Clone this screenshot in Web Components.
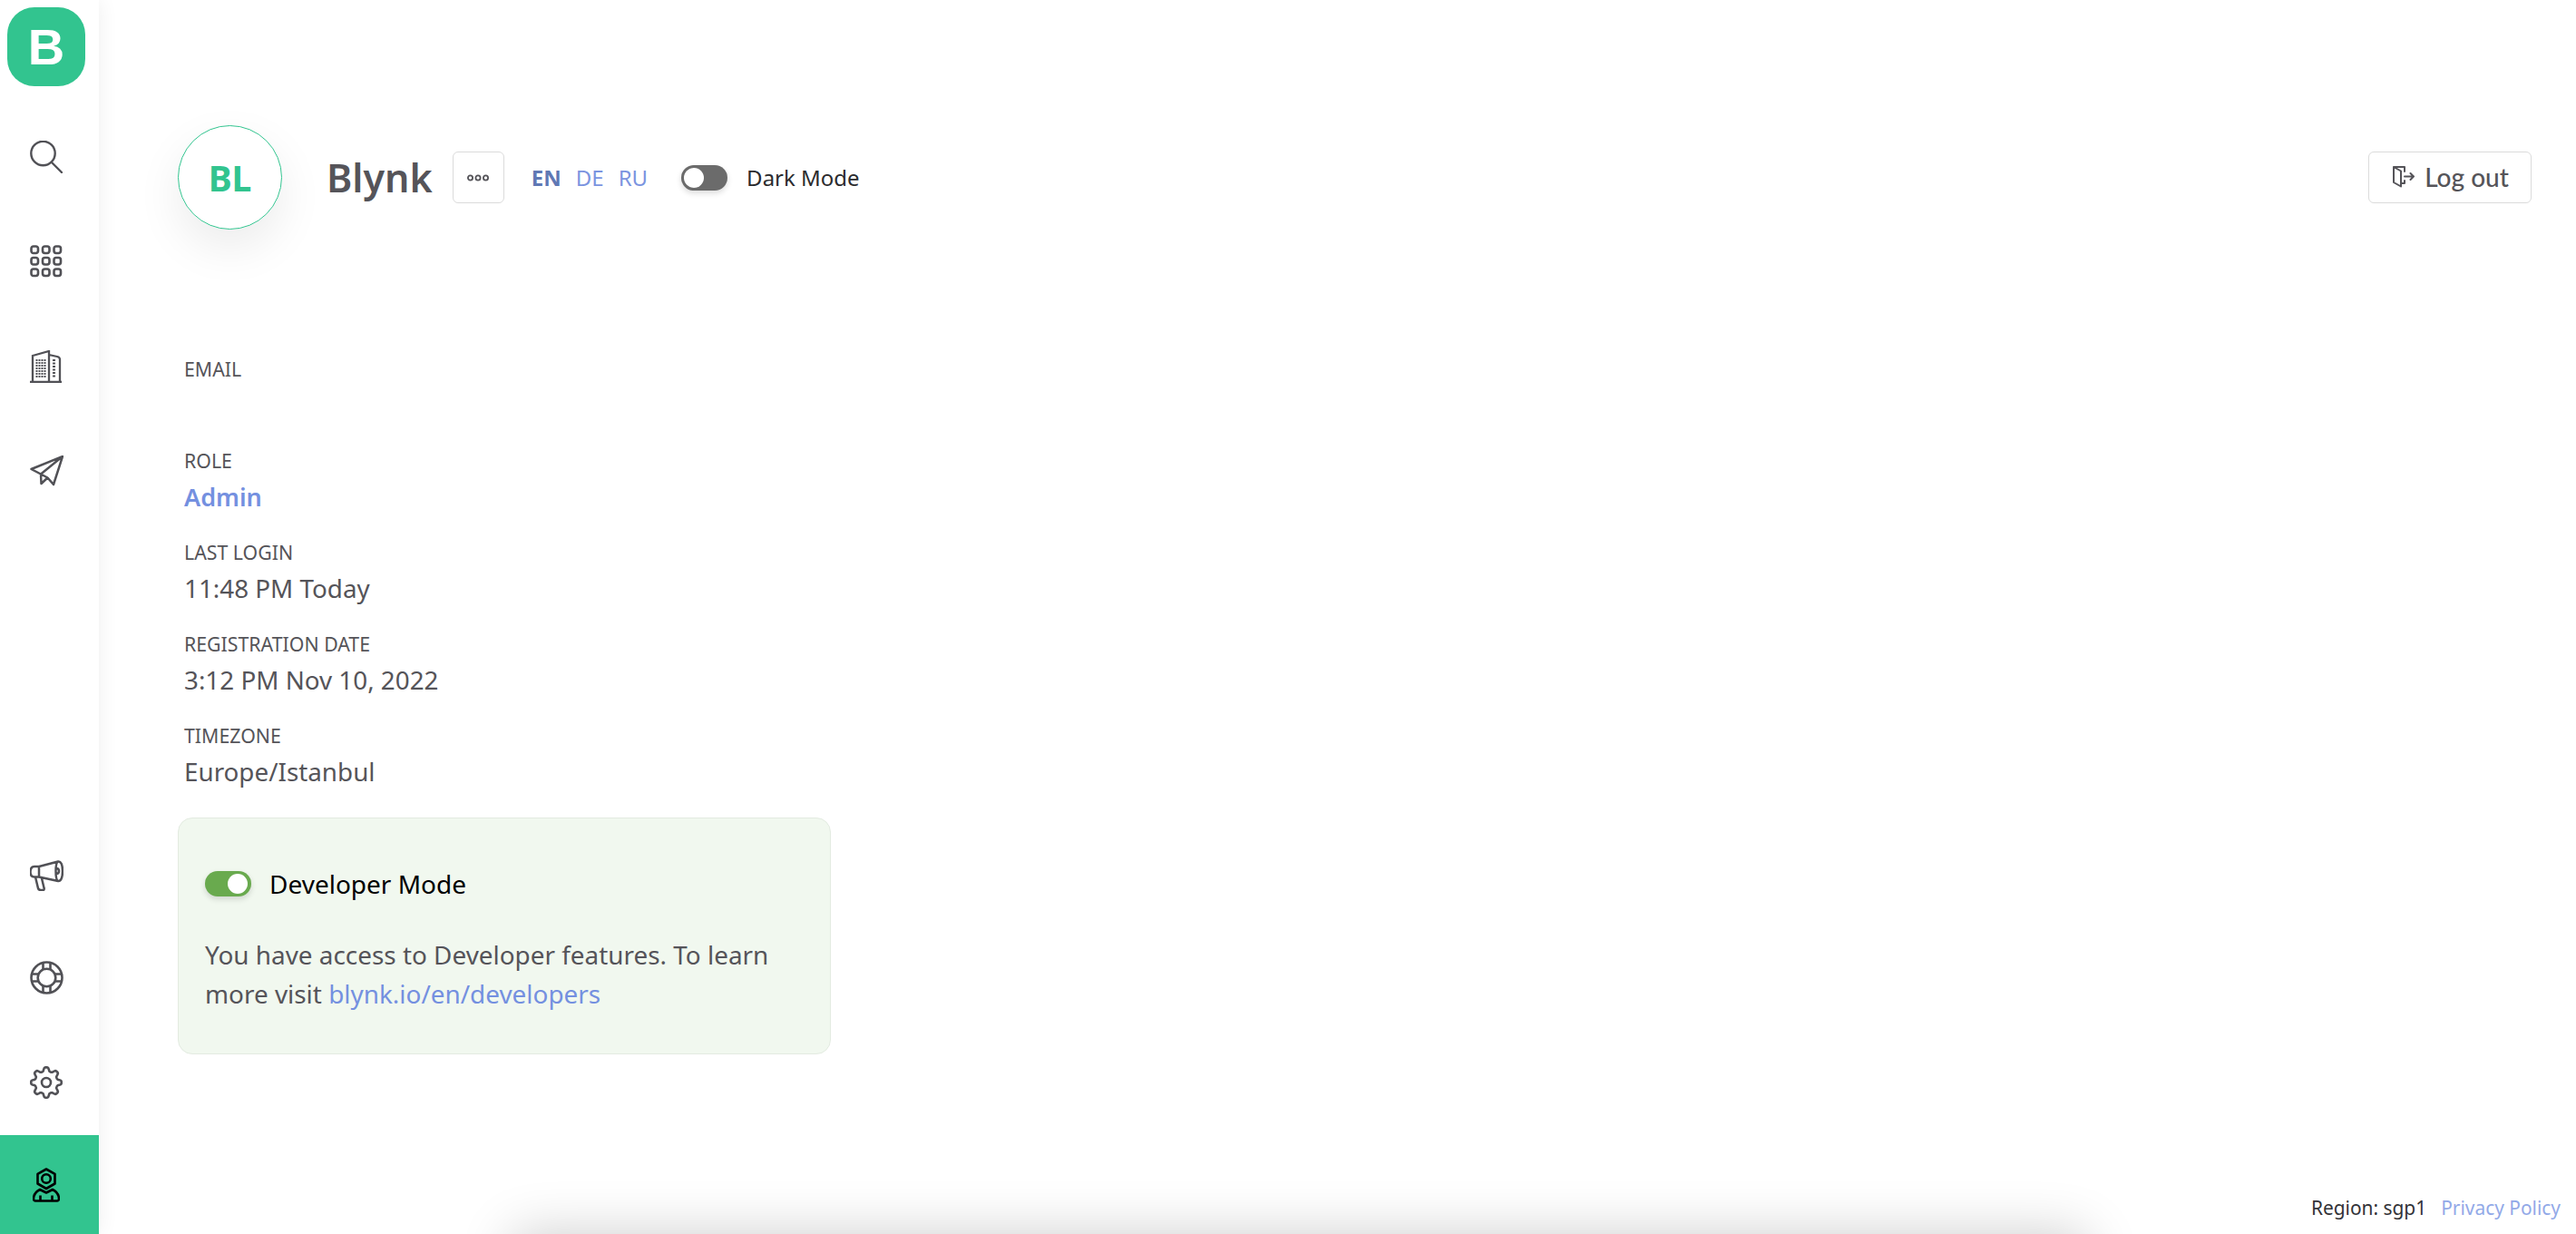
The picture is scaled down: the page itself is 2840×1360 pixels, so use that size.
<!DOCTYPE html>
<html lang="en">
<head>
<meta charset="utf-8">
<title>Blynk profile</title>
<style>
    html, body { margin: 0; height: 100%; }
    body {
        font-family: "Noto Sans", sans-serif;
        color: #555459;
        background: #fff;
        overflow: hidden;
    }
</style>
</head>
<body>
<app-shell>
    <side-bar slot="side">
        <nav-item slot="top">
            <svg width="36" height="36" viewBox="0 0 36 36" fill="none" stroke="currentColor" stroke-width="2.400" stroke-linecap="round"><circle cx="14.500" cy="14" r="13.200"/><path d="M24 24l11 11"/></svg>
        </nav-item>
        <nav-item slot="top">
            <svg width="36" height="36" viewBox="0 0 36 36" fill="none" stroke="currentColor" stroke-width="2.600"><rect x="1.500" y="1.500" width="7.500" height="7.500" rx="2.400"/><rect x="14" y="1.500" width="7.500" height="7.500" rx="2.400"/><rect x="26.500" y="1.500" width="7.500" height="7.500" rx="2.400"/><rect x="1.500" y="14" width="7.500" height="7.500" rx="2.400"/><rect x="14" y="14" width="7.500" height="7.500" rx="2.400"/><rect x="26.500" y="14" width="7.500" height="7.500" rx="2.400"/><rect x="1.500" y="26.500" width="7.500" height="7.500" rx="2.400"/><rect x="14" y="26.500" width="7.500" height="7.500" rx="2.400"/><rect x="26.500" y="26.500" width="7.500" height="7.500" rx="2.400"/></svg>
        </nav-item>
        <nav-item slot="top">
            <svg width="36" height="36" viewBox="0 0 36 36" fill="none" stroke="currentColor" stroke-width="2.300"><path d="M0 35h35" stroke-width="2.600"/><path d="M3 35V6L21 1v34M21 5l9 2c2 .5 3 1.500 3 3v25"/><path d="M7.500 10v21M10.500 10v21M13.500 10v21M16.500 10v21" stroke-width="2" stroke-dasharray="2 1"/><path d="M26.500 10v21" stroke-width="3" stroke-dasharray="2 1.500"/></svg>
        </nav-item>
        <nav-item slot="top">
            <svg width="37" height="34" viewBox="0 0 37 34" fill="none" stroke="currentColor" stroke-width="2.500" stroke-linejoin="round"><path d="M36 1L1.500 15l10.500 5.500L36 1zM36 1L12 20.500l.5 10.500 7-6.500L26 32 36 1zM19.500 24.500L12 20.500"/></svg>
        </nav-item>
        <nav-item slot="bottom">
            <svg style="margin-top:5px" width="37" height="34" viewBox="0 0 37 34" fill="none" stroke="currentColor" stroke-width="2.500" stroke-linejoin="round"><path d="M10 7L31 1.500c3-.5 5 3 5 10.500s-2 11.500-5 11L10 18.500H5c-3 0-4.500-2-4.500-5.500S2 7 5 7h5zM10 7v11.500M31 1.500c-2 1-2.500 5-2.500 10.500S29 22 31 23M29 9c2 0 3 1.500 3 3s-1 3-3 3M6 18.500L9 31c.5 1.500 1.500 2 3 2h2c1.500 0 2-1 1.500-2.500L13 20"/></svg>
        </nav-item>
        <nav-item slot="bottom">
            <svg width="37" height="37" viewBox="0 0 37 37" fill="none" stroke="currentColor" stroke-width="2.600"><circle cx="18.500" cy="18.500" r="17"/><circle cx="18.500" cy="18.500" r="9.800"/><path d="M14.500 2v8M22.500 2v8M14.500 27v8M22.500 27v8M2 14.500h8M2 22.500h8M27 14.500h8M27 22.500h8"/></svg>
        </nav-item>
        <nav-item slot="bottom">
            <svg id="gear" width="36" height="36" viewBox="0 0 36 36" fill="none" stroke="currentColor" stroke-width="2.600" stroke-linejoin="round"><circle cx="18" cy="18" r="5"/></svg>
        </nav-item>
        <nav-item slot="bottom" active>
            <svg width="30" height="38" viewBox="0 0 30 38" fill="none" stroke="#000" stroke-width="2.600" stroke-linejoin="round"><path d="M15 1.500l9.500 5.300v10.700L15 23l-9.500-5.500V6.800z"/><circle cx="15" cy="12" r="4.800"/><path d="M8 24l7 3.500L22 24c4 2 7 5.500 7 10.500 0 1-1 2-2 2H3c-1 0-2-1-2-2C1 29.500 4 26 8 24zM8.500 30.500v6M21.500 30.500v6"/></svg>
        </nav-item>
    </side-bar>
    <profile-header name="Blynk" initials="BL"></profile-header>
    <profile-details>
        <info-field label="Email"></info-field>
        <info-field label="Role" kind="link">Admin</info-field>
        <info-field label="Last login">11:48 PM Today</info-field>
        <info-field label="Registration date">3:12 PM Nov 10, 2022</info-field>
        <info-field label="Timezone">Europe/Istanbul</info-field>
    </profile-details>
    <dev-card></dev-card>
    <page-footer></page-footer>
</app-shell>

<script>
// ── Shell ─────────────────────────────────────────────────────────────────────
class AppShell extends HTMLElement {
    constructor() {
        super();
        this.attachShadow({ mode: 'open' });
        this.shadowRoot.innerHTML = `
            <style>
                :host { display: flex; height: 1360px; position: relative; overflow: hidden; }
                main {
                    flex: 1;
                    display: flex;
                    flex-direction: column;
                    padding: 138px 0 0 87px;
                    min-width: 0;
                }
                .edge {
                    position: absolute;
                    left: 565px;
                    top: 1360px;
                    width: 1735px;
                    height: 100px;
                    box-shadow: 0 0 60px rgba(0,0,0,0.2);
                }
            </style>
            <slot name="side"></slot>
            <main><slot></slot></main>
            <div class="edge"></div>
        `;
    }
}

// ── Sidebar ───────────────────────────────────────────────────────────────────
class SideBar extends HTMLElement {
    constructor() {
        super();
        this.attachShadow({ mode: 'open' });
        this.shadowRoot.innerHTML = `
            <style>
                :host {
                    display: flex;
                    flex-direction: column;
                    flex: 0 0 109px;
                    background: #fff;
                    box-shadow: 0 0 22px rgba(0,0,0,0.07);
                    position: relative;
                    z-index: 1;
                }
                .logo {
                    width: 86px;
                    height: 87px;
                    margin: 8px 0 20px 8px;
                    border-radius: 30px;
                    background: #32c48f;
                    color: #fff;
                    display: flex;
                    align-items: center;
                    justify-content: center;
                    font: bold 56px "Liberation Sans", sans-serif;
                }
                .bottom { margin-top: auto; display: flex; flex-direction: column; }
                .top { display: flex; flex-direction: column; }
            </style>
            <div class="logo">B</div>
            <div class="top"><slot name="top"></slot></div>
            <div class="bottom"><slot name="bottom"></slot></div>
        `;
    }
}

class NavItem extends HTMLElement {
    constructor() {
        super();
        this.attachShadow({ mode: 'open' });
        this.shadowRoot.innerHTML = `
            <style>
                :host {
                    display: flex;
                    align-items: center;
                    justify-content: center;
                    height: 115.5px;
                    padding-right: 7px;
                    color: #515156;
                }
                :host([active]) { background: #32c48f; height: 109px; }
            </style>
            <slot></slot>
        `;
    }
}

// ── Toggle ────────────────────────────────────────────────────────────────────
class ToggleSwitch extends HTMLElement {
    constructor() {
        super();
        this.attachShadow({ mode: 'open' });
        this.shadowRoot.innerHTML = `
            <style>
                :host {
                    display: inline-block;
                    position: relative;
                    width: 51px;
                    height: 28px;
                    border-radius: 14px;
                    background: #6b6b6b;
                    box-shadow: 0 3px 6px rgba(0,0,0,0.14);
                }
                :host([checked]) { background: #69aa4e; }
                .knob {
                    position: absolute;
                    top: 3px;
                    left: 3px;
                    width: 22px;
                    height: 22px;
                    border-radius: 50%;
                    background: #fff;
                }
                :host([checked]) .knob { left: 25px; }
            </style>
            <div class="knob"></div>
        `;
    }
}

// ── Header ────────────────────────────────────────────────────────────────────
class ProfileHeader extends HTMLElement {
    constructor() {
        super();
        this.attachShadow({ mode: 'open' });
    }

    connectedCallback() {
        const name = this.getAttribute('name');
        const initials = this.getAttribute('initials');
        this.shadowRoot.innerHTML = `
            <style>
                :host { display: flex; align-items: center; height: 115px; padding-right: 49px; }
                .avatar {
                    box-sizing: border-box;
                    width: 115px;
                    height: 115px;
                    border-radius: 50%;
                    border: 1px solid #32c48f;
                    box-shadow: 0 20px 50px rgba(0,0,0,0.08);
                    display: flex;
                    align-items: center;
                    justify-content: center;
                    color: #32c48f;
                    font-size: 39px;
                    font-weight: 700;
                }
                h1 { margin: 0 22px 0 49px; font-size: 43px; font-weight: 600; color: #555459; line-height: 56px; }
                .more, .logout {
                    box-sizing: border-box;
                    height: 57px;
                    border: 1px solid #dbdbdb;
                    border-radius: 6px;
                    background: #fff;
                    display: flex;
                    align-items: center;
                    justify-content: center;
                }
                .more { width: 57px; color: #555459; }
                .langs { display: flex; gap: 16px; margin-left: 30px; font-size: 24px; color: #7b94e0; }
                .langs b { color: #5f78b4; font-weight: 700; }
                toggle-switch { margin-left: 37px; }
                .mode { margin-left: 21px; font-size: 24px; color: #2b2b2e; }
                .logout {
                    margin-left: auto;
                    width: 180px;
                    gap: 10px;
                    padding: 0 0 2px 2px;
                    font: 500 28px Lato, sans-serif;
                    color: #555459;
                }
            </style>
            <div class="avatar">${initials}</div>
            <h1>${name}</h1>
            <div class="more">
                <svg width="24" height="8" viewBox="0 0 24 8" fill="none" stroke="currentColor" stroke-width="1.800"><circle cx="3.500" cy="4" r="2.600"/><circle cx="12" cy="4" r="2.600"/><circle cx="20.500" cy="4" r="2.600"/></svg>
            </div>
            <div class="langs"><b>EN</b><span>DE</span><span>RU</span></div>
            <toggle-switch></toggle-switch>
            <span class="mode">Dark Mode</span>
            <div class="logout">
                <svg width="25" height="24" viewBox="0 0 25 24" fill="none" stroke="currentColor" stroke-width="2" stroke-linejoin="round" stroke-linecap="round"><path d="M13 6V1H1v17l8 4.500V5.500L1 1M9 19h4v-3M13 11.500h10M19.500 8l3.500 3.500-3.500 3.500"/></svg>
                <span>Log out</span>
            </div>
        `;
    }
}

// ── Details ───────────────────────────────────────────────────────────────────
class ProfileDetails extends HTMLElement {
    constructor() {
        super();
        this.attachShadow({ mode: 'open' });
        this.shadowRoot.innerHTML = `
            <style>
                :host { display: flex; flex-direction: column; margin: 139px 0 4px 7px; }
            </style>
            <slot></slot>
        `;
    }
}

class InfoField extends HTMLElement {
    constructor() {
        super();
        this.attachShadow({ mode: 'open' });
    }

    connectedCallback() {
        this.shadowRoot.innerHTML = `
            <style>
                :host { display: block; height: 80px; margin-bottom: 21px; }
                .label { font-size: 21.300px; line-height: 30px; text-transform: uppercase; color: #555459; }
                .value { font-size: 27.800px; line-height: 48px; color: #555459; }
                :host([kind="link"]) .value { color: #7490e0; font-weight: 600; font-size: 27px; line-height: 50px; }
            </style>
            <div class="label">${this.getAttribute('label')}</div>
            <div class="value"><slot></slot></div>
        `;
    }
}

// ── Developer card ────────────────────────────────────────────────────────────
class DevCard extends HTMLElement {
    constructor() {
        super();
        this.attachShadow({ mode: 'open' });
        this.shadowRoot.innerHTML = `
            <style>
                :host {
                    display: block;
                    box-sizing: border-box;
                    width: 720px;
                    height: 261px;
                    padding: 52px 29px 0;
                    border: 1px solid #e3ebe1;
                    border-radius: 16px;
                    background: #f1f8ef;
                }
                .row { display: flex; align-items: center; gap: 20px; height: 40px; font-size: 28px; color: #000; }
                p { margin: 37px 0 0; font-size: 27.900px; line-height: 43px; color: #555459; }
                a { color: #7490e0; text-decoration: none; }
            </style>
            <div class="row"><toggle-switch checked></toggle-switch><span>Developer Mode</span></div>
            <p>You have access to Developer features. To learn<br>more visit <a href="#">blynk.io/en/developers</a></p>
        `;
    }
}

// ── Footer ────────────────────────────────────────────────────────────────────
class PageFooter extends HTMLElement {
    constructor() {
        super();
        this.attachShadow({ mode: 'open' });
        this.shadowRoot.innerHTML = `
            <style>
                :host {
                    display: flex;
                    justify-content: flex-end;
                    gap: 16px;
                    margin-top: auto;
                    padding: 0 17px 14px 0;
                    font-size: 20.900px;
                    line-height: 30px;
                    color: #333338;
                }
                a { color: #92a9e8; text-decoration: none; }
            </style>
            <span>Region: sgp1</span>
            <a href="#">Privacy Policy</a>
        `;
    }
}

// gear outline: 8 rounded teeth round the hub
function gearPath() {
    const pts = [];
    for (let i = 0; i < 96; i++) {
        const a = (i / 96) * Math.PI * 2;
        const r = 14.6 + 2.1 * Math.max(-1, Math.min(1, Math.cos(a * 8) * 1.6));
        pts.push((18 + Math.cos(a) * r).toFixed(2) + ' ' + (18 + Math.sin(a) * r).toFixed(2));
    }
    return 'M' + pts.join('L') + 'Z';
}
const gear = document.getElementById('gear');
const gearOutline = document.createElementNS('http://www.w3.org/2000/svg', 'path');
gearOutline.setAttribute('d', gearPath());
gear.appendChild(gearOutline);

customElements.define('app-shell', AppShell);
customElements.define('side-bar', SideBar);
customElements.define('nav-item', NavItem);
customElements.define('toggle-switch', ToggleSwitch);
customElements.define('profile-header', ProfileHeader);
customElements.define('profile-details', ProfileDetails);
customElements.define('info-field', InfoField);
customElements.define('dev-card', DevCard);
customElements.define('page-footer', PageFooter);
</script>
</body>
</html>
